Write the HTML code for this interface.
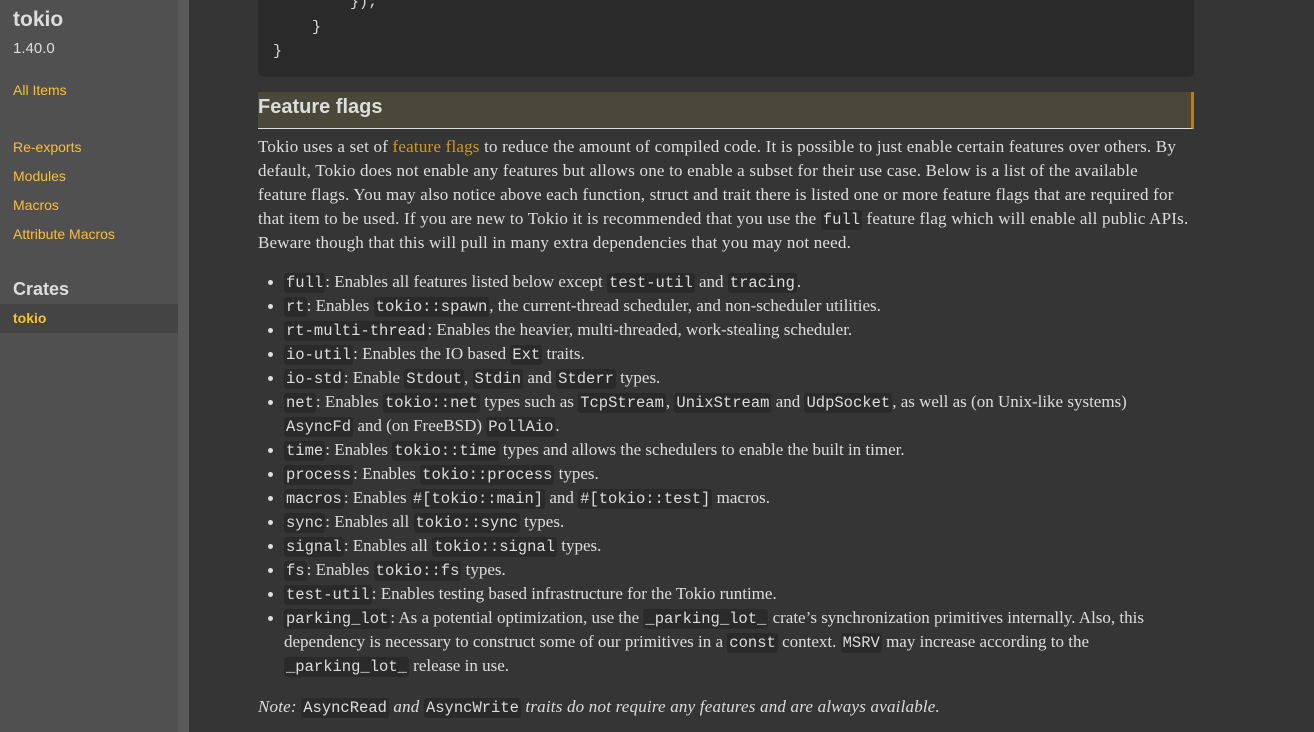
<!DOCTYPE html>
<html><head><meta charset="utf-8"><style>
*{margin:0;padding:0;box-sizing:border-box}
html,body{width:1314px;height:732px;overflow:hidden;background:#353535}
body{position:relative;font-family:"Liberation Serif",serif;color:#ddd}
.side{position:absolute;left:0;top:0;width:178px;height:732px;background:#505050;font-family:"Liberation Sans",sans-serif}
.track{position:absolute;left:178px;top:0;width:11px;height:732px;background:#5a5a5a}
.side a{position:absolute;left:13px;color:#fdbf35;font-size:14px;text-decoration:none}
.code{position:absolute;left:258px;top:-10px;width:936px;height:87px;background:#2a2a2a;border-radius:6px;font-family:"Liberation Mono",monospace;font-size:15px;color:#ddd}
.code div{position:absolute;white-space:pre}
h2{position:absolute;left:258px;top:92px;width:936px;height:37px;background:#4a4939;border-right:3px solid #c47a14;border-bottom:1px solid #ddd;font-family:"Liberation Sans",sans-serif;font-size:20px;font-weight:bold;color:#ddd;padding:4px 0 0 0}
.txt{position:absolute;left:258px;font-size:17px;line-height:24px;white-space:nowrap;letter-spacing:0.2px}
code{font-family:"Liberation Mono",monospace;font-size:15.5px;line-height:1;background:#2a2a2a;border-radius:3px;padding:1px 2px;color:#ddd;letter-spacing:0}
ul{position:absolute;left:284px;top:270px;list-style:none;font-size:17px;line-height:24px;white-space:nowrap}
ul li{position:relative}
ul li:before{content:"";position:absolute;left:-16px;top:10px;width:5px;height:5px;border-radius:50%;background:#ddd}
a.l{color:#d2991d;text-decoration:none}
</style></head><body>
<div class="side">
<div style="position:absolute;left:13px;top:8px;font-size:21px;font-weight:bold;color:#ddd">tokio</div>
<div style="position:absolute;left:13px;top:40px;font-size:15px;color:#ddd">1.40.0</div>
<a style="top:82px">All Items</a>
<a style="top:139px">Re-exports</a>
<a style="top:168px">Modules</a>
<a style="top:197px">Macros</a>
<a style="top:226px">Attribute Macros</a>
<div style="position:absolute;left:13px;top:279px;font-size:18px;font-weight:bold;color:#ddd">Crates</div>
<div style="position:absolute;left:0;top:304px;width:178px;height:29px;background:#444"></div>
<a style="top:310px;font-weight:bold">tokio</a>
</div>
<div class="track"></div>
<div class="code">
<div style="left:92px;top:4px">});</div>
<div style="left:54px;top:29px">}</div>
<div style="left:15px;top:53px">}</div>
</div>
<h2>Feature flags</h2>
<div class="txt" style="top:135px">Tokio uses a set of <a class="l">feature flags</a> to reduce the amount of compiled code. It is possible to just enable certain features over others. By<br>default, Tokio does not enable any features but allows one to enable a subset for their use case. Below is a list of the available<br>feature flags. You may also notice above each function, struct and trait there is listed one or more feature flags that are required for<br>that item to be used. If you are new to Tokio it is recommended that you use the <code>full</code> feature flag which will enable all public APIs.<br>Beware though that this will pull in many extra dependencies that you may not need.</div>
<ul>
<li><code>full</code>: Enables all features listed below except <code>test-util</code> and <code>tracing</code>.</li>
<li><code>rt</code>: Enables <code>tokio::spawn</code>, the current-thread scheduler, and non-scheduler utilities.</li>
<li><code>rt-multi-thread</code>: Enables the heavier, multi-threaded, work-stealing scheduler.</li>
<li><code>io-util</code>: Enables the IO based <code>Ext</code> traits.</li>
<li><code>io-std</code>: Enable <code>Stdout</code>, <code>Stdin</code> and <code>Stderr</code> types.</li>
<li><code>net</code>: Enables <code>tokio::net</code> types such as <code>TcpStream</code>, <code>UnixStream</code> and <code>UdpSocket</code>, as well as (on Unix-like systems)<br><code>AsyncFd</code> and (on FreeBSD) <code>PollAio</code>.</li>
<li><code>time</code>: Enables <code>tokio::time</code> types and allows the schedulers to enable the built in timer.</li>
<li><code>process</code>: Enables <code>tokio::process</code> types.</li>
<li><code>macros</code>: Enables <code>#[tokio::main]</code> and <code>#[tokio::test]</code> macros.</li>
<li><code>sync</code>: Enables all <code>tokio::sync</code> types.</li>
<li><code>signal</code>: Enables all <code>tokio::signal</code> types.</li>
<li><code>fs</code>: Enables <code>tokio::fs</code> types.</li>
<li><code>test-util</code>: Enables testing based infrastructure for the Tokio runtime.</li>
<li><code>parking_lot</code>: As a potential optimization, use the <code>_parking_lot_</code> crate’s synchronization primitives internally. Also, this<br>dependency is necessary to construct some of our primitives in a <code>const</code> context. <code>MSRV</code> may increase according to the<br><code>_parking_lot_</code> release in use.</li>
</ul>
<div class="txt" style="top:695px;font-style:italic">Note: <code style="font-style:normal">AsyncRead</code> and <code style="font-style:normal">AsyncWrite</code> traits do not require any features and are always available.</div>
</body></html>
